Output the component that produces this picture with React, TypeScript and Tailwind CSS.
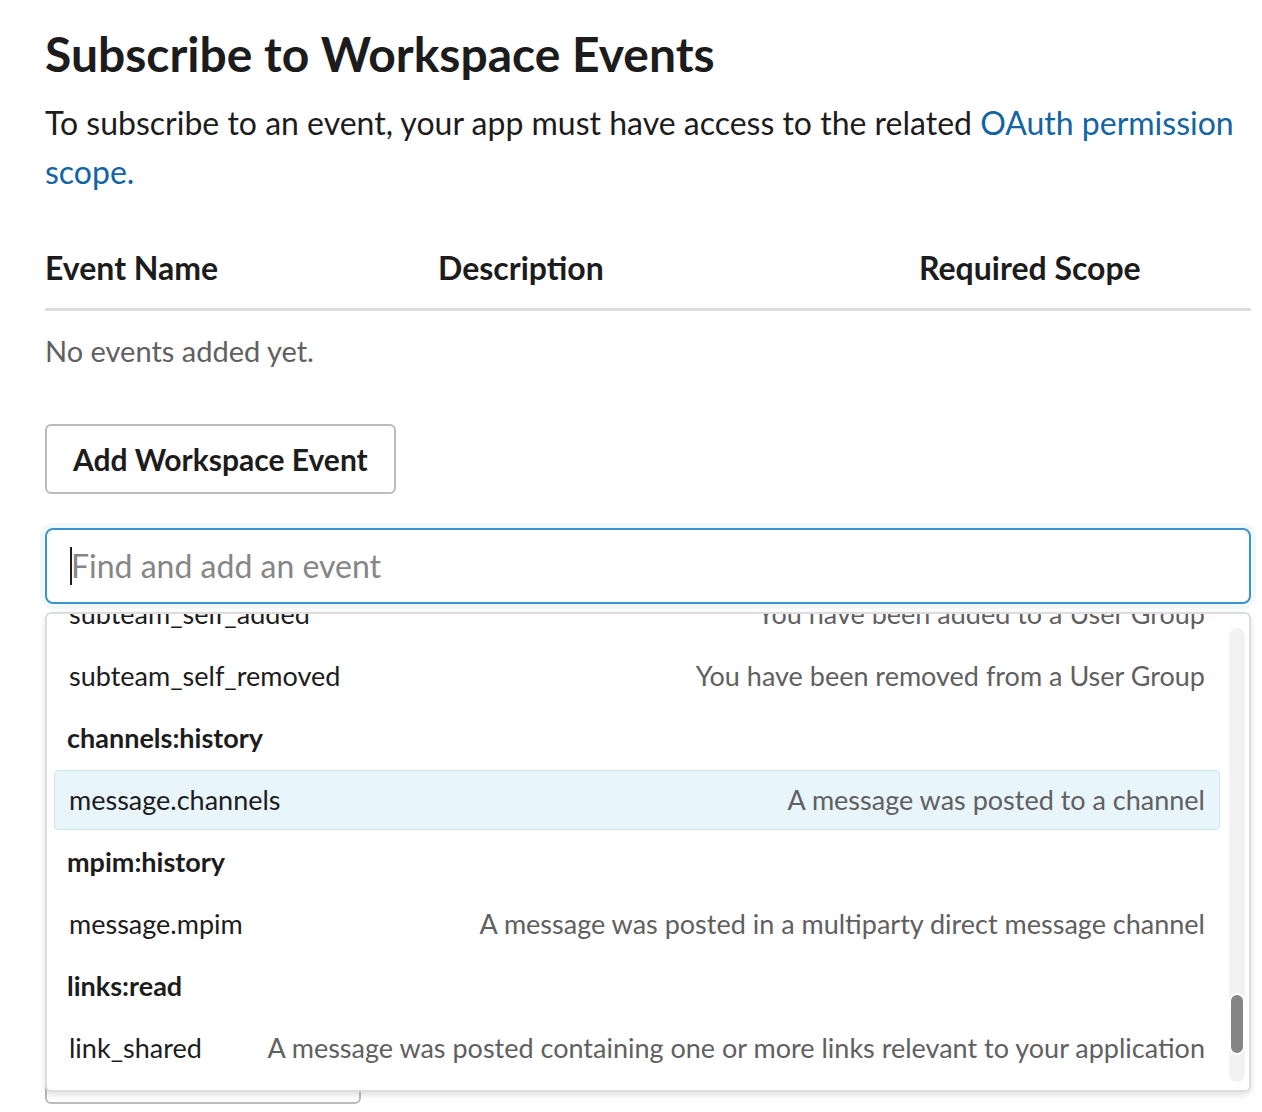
import React from 'react';

type Row =
  | { kind: 'group'; label: string }
  | { kind: 'event'; name: string; desc: string; active?: boolean };

const rows: Row[] = [
  { kind: 'event', name: 'subteam_self_added', desc: 'You have been added to a User Group' },
  { kind: 'event', name: 'subteam_self_removed', desc: 'You have been removed from a User Group' },
  { kind: 'group', label: 'channels:history' },
  { kind: 'event', name: 'message.channels', desc: 'A message was posted to a channel', active: true },
  { kind: 'group', label: 'mpim:history' },
  { kind: 'event', name: 'message.mpim', desc: 'A message was posted in a multiparty direct message channel' },
  { kind: 'group', label: 'links:read' },
  {
    kind: 'event',
    name: 'link_shared',
    desc: 'A message was posted containing one or more links relevant to your application',
  },
];

const EventRow: React.FC<{ row: Row }> = ({ row }) => {
  if (row.kind === 'group') {
    return (
      <div className="h-[62px] flex items-center px-[20px] text-[27px] font-bold text-[#1d1c1d]">
        {row.label}
      </div>
    );
  }
  return (
    <div className="h-[62px] py-px pl-[7px] pr-[29px]">
      <div
        className={`h-[60px] flex items-center justify-between pl-[14px] pr-[14px] rounded-[4px] border ${
          row.active ? 'bg-[#e8f5fa] border-[#cfe6f2]' : 'border-transparent'
        }`}
      >
        <span className="text-[27px] text-[#1d1c1d] whitespace-nowrap">{row.name}</span>
        <span className="text-[27px] text-[#616061] whitespace-nowrap ml-[40px]">{row.desc}</span>
      </div>
    </div>
  );
};

export default function App() {
  return (
    <div className="min-h-screen bg-white font-['Lato',sans-serif] text-[#1d1c1d] overflow-hidden">
      <div className="ml-[45px] w-[1206px] pt-[25px]">
        <h1 className="text-[48px] font-bold leading-[58px]">Subscribe to Workspace Events</h1>
        <p className="mt-[15px] text-[32px] leading-[49px]">
          To subscribe to an event, your app must have access to the related{' '}
          <a className="text-[#1264a3]">OAuth permission scope.</a>
        </p>

        <div className="mt-[52px] flex border-b-[3px] border-[#dddddd] pb-[20px] text-[32px] font-bold leading-[40px]">
          <div className="w-[393px]">Event Name</div>
          <div className="w-[481px]">Description</div>
          <div className="flex-1">Required Scope</div>
        </div>

        <p className="mt-[22px] text-[29px] leading-[36px] text-[#616061]">No events added yet.</p>

        <button className="mt-[55px] h-[70px] px-[26px] border-2 border-[#bbbbbb] rounded-[6px] text-[30px] font-bold text-[#1d1c1d]">
          Add Workspace Event
        </button>

        <div className="relative mt-[34px]">
          <div className="h-[76px] flex items-center pl-[23px] border-2 border-[#3d93cf] rounded-[8px] shadow-[0_0_0_5px_rgba(29,155,209,0.06)]">
            <span className="w-[2px] h-[38px] bg-[#1d1c1d]" />
            <span className="text-[32px] text-[#868686] -ml-px">Find and add an event</span>
          </div>

          <div className="absolute left-0 right-0 top-[calc(100%+8px)] z-10 h-[480px] bg-white border-2 border-[#dddddd] rounded-[6px] shadow-[0_3px_6px_rgba(0,0,0,0.12)] overflow-hidden">
            <div className="-mt-[31px]">
              {rows.map((row, i) => (
                <EventRow key={i} row={row} />
              ))}
            </div>
            <div className="absolute right-[4px] top-[14px] bottom-[8px] w-[16px] rounded-full bg-[#f2f2f2]">
              <div className="absolute left-0 right-0 top-[365px] h-[62px] rounded-full bg-[#858585] border-2 border-white" />
            </div>
          </div>
        </div>

        <button className="mt-[430px] h-[70px] w-[316px] border-2 border-[#bbbbbb] rounded-[6px] text-[30px] font-bold text-[#1d1c1d]">
          Save Changes
        </button>
      </div>
    </div>
  );
}
